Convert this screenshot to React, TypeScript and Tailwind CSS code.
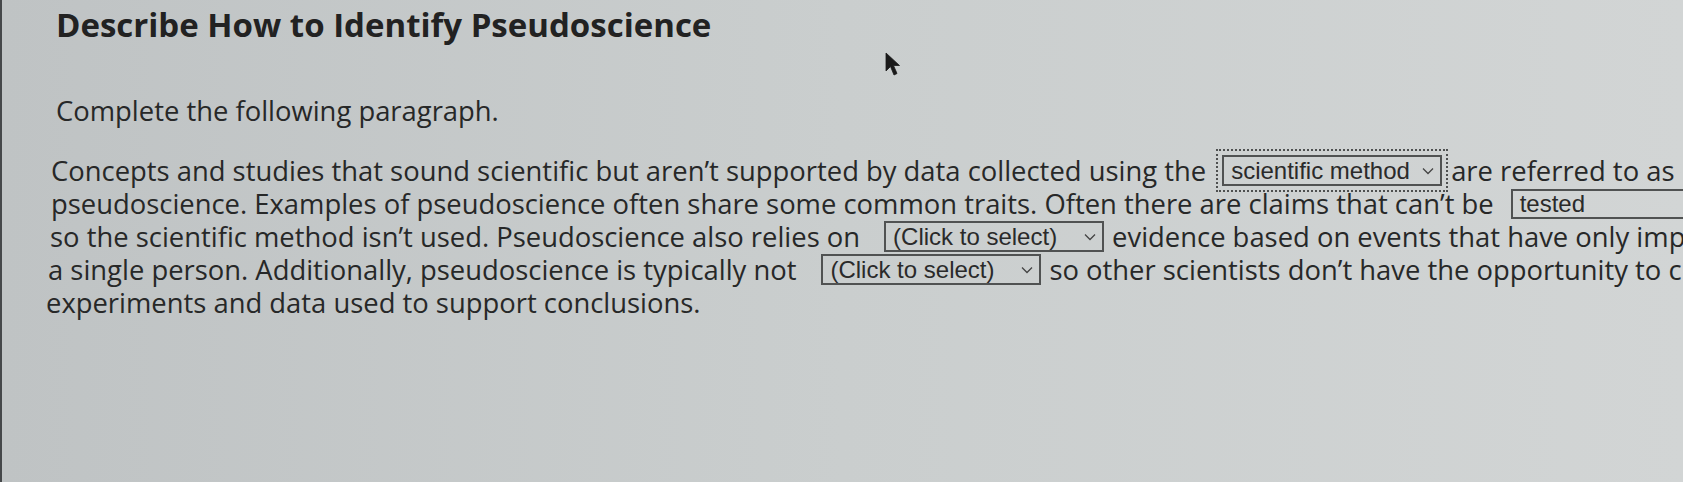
import React from "react";

const body = { fontFamily: "'Open Sans', Lato, sans-serif" } as React.CSSProperties;

function Chevron() {
  return (
    <svg width="12" height="8" viewBox="0 0 12 8" className="shrink-0">
      <polyline points="1,1.5 6,6.5 11,1.5" fill="none" stroke="#444" strokeWidth="1.3" />
    </svg>
  );
}

function Select({ label, className = "" }: { label: string; className?: string }) {
  return (
    <span
      className={`inline-flex h-[31px] w-[220px] shrink-0 items-center justify-between border-2 border-[#505252] pl-[7px] pr-[6px] text-[24px] leading-none text-[#2a2a2a] ${className}`}
      style={{ fontFamily: "'Liberation Sans', Arial, sans-serif" }}
    >
      <span>{label}</span>
      <Chevron />
    </span>
  );
}

export default function App() {
  return (
    <div
      className="relative h-[482px] w-[1683px] overflow-hidden border-l-2 border-[#45484a] bg-gradient-to-r from-[#bfc3c4] via-[#cacece] to-[#d2d5d5] text-[#272828]"
      style={body}
    >
      <div className="pl-[54px] pt-[5px]">
        <h1 className="whitespace-nowrap text-[33px] font-bold leading-[40px] text-[#222222]">
          Describe How to Identify Pseudoscience
        </h1>
        <p className="mt-[49px] whitespace-nowrap text-[27.4px] leading-[33px]">
          Complete the following paragraph.
        </p>
      </div>

      <div className="mt-[27px] whitespace-nowrap text-[27.4px] leading-[33px]">
        <div className="ml-[49px] flex h-[33px] items-center">
          <span>Concepts and studies that sound scientific but aren’t supported by data collected using the</span>
          <span className="ml-[10px] mr-[3px] inline-flex border-2 border-dotted border-[#4e5050] p-[4px]">
            <Select label="scientific method" />
          </span>
          <span>are referred to as</span>
        </div>
        <div className="ml-[49px] flex h-[33px] items-center">
          <span>pseudoscience. Examples of pseudoscience often share some common traits. Often there are claims that can’t be</span>
          <span
            className="ml-[17px] inline-flex h-[30px] w-[280px] shrink-0 items-center border-2 border-[#505252] pl-[7px] text-[24px] leading-none text-[#2a2a2a]"
            style={{ fontFamily: "'Liberation Sans', Arial, sans-serif" }}
          >
            tested
          </span>
        </div>
        <div className="ml-[48px] flex h-[33px] items-center">
          <span>so the scientific method isn’t used. Pseudoscience also relies on</span>
          <Select label="(Click to select)" className="ml-[24px] mr-[8px]" />
          <span>evidence based on events that have only impacted</span>
        </div>
        <div className="ml-[46px] flex h-[33px] items-center">
          <span>a single person. Additionally, pseudoscience is typically not</span>
          <Select label="(Click to select)" className="ml-[25px] mr-[8px]" />
          <span>so other scientists don’t have the opportunity to check the</span>
        </div>
        <div className="ml-[44px] flex h-[33px] items-center">
          <span>experiments and data used to support conclusions.</span>
        </div>
      </div>

      <svg
        className="absolute left-[883px] top-[52px]"
        width="16"
        height="26"
        viewBox="0 0 16 26"
      >
        <path d="M1 1 L1 19 L5.5 14.5 L9 23 L12 21.5 L8.5 13.5 L14.5 13.5 Z" fill="#1a1a1a" stroke="#1a1a1a" strokeWidth="0.8" strokeLinejoin="round" />
      </svg>
    </div>
  );
}
